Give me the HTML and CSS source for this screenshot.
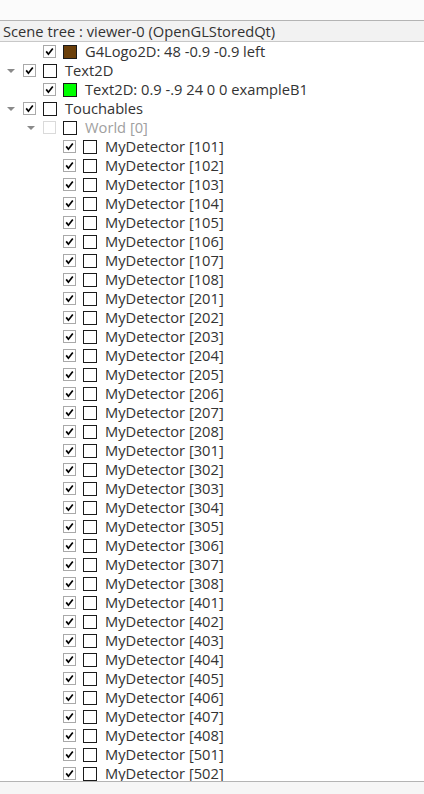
FILE: index.html
```html
<!DOCTYPE html>
<html lang="en">
<head>
    <meta charset="UTF-8">
    <title>Scene tree</title>
    <link rel="stylesheet" href="styles.css">
</head>
<body>
    <div class="top-space"></div>
    <div class="header">Scene tree : viewer-0 (OpenGLStoredQt)</div>

    <div class="tree">
        <div class="row lvl1"><span class="toggle"></span><span class="check on"></span><span class="swatch brown"></span><span class="label">G4Logo2D: 48 -0.9 -0.9 left</span></div>
        <div class="row lvl0"><span class="toggle open"></span><span class="check on"></span><span class="swatch"></span><span class="label">Text2D</span></div>
        <div class="row lvl1"><span class="toggle"></span><span class="check on"></span><span class="swatch green"></span><span class="label">Text2D: 0.9 -.9 24 0 0 exampleB1</span></div>
        <div class="row lvl0"><span class="toggle open"></span><span class="check on"></span><span class="swatch"></span><span class="label">Touchables</span></div>
        <div class="row lvl1"><span class="toggle open"></span><span class="check off"></span><span class="swatch"></span><span class="label muted">World [0]</span></div>
        <div class="row lvl2"><span class="toggle"></span><span class="check on"></span><span class="swatch"></span><span class="label">MyDetector [101]</span></div>
        <div class="row lvl2"><span class="toggle"></span><span class="check on"></span><span class="swatch"></span><span class="label">MyDetector [102]</span></div>
        <div class="row lvl2"><span class="toggle"></span><span class="check on"></span><span class="swatch"></span><span class="label">MyDetector [103]</span></div>
        <div class="row lvl2"><span class="toggle"></span><span class="check on"></span><span class="swatch"></span><span class="label">MyDetector [104]</span></div>
        <div class="row lvl2"><span class="toggle"></span><span class="check on"></span><span class="swatch"></span><span class="label">MyDetector [105]</span></div>
        <div class="row lvl2"><span class="toggle"></span><span class="check on"></span><span class="swatch"></span><span class="label">MyDetector [106]</span></div>
        <div class="row lvl2"><span class="toggle"></span><span class="check on"></span><span class="swatch"></span><span class="label">MyDetector [107]</span></div>
        <div class="row lvl2"><span class="toggle"></span><span class="check on"></span><span class="swatch"></span><span class="label">MyDetector [108]</span></div>
        <div class="row lvl2"><span class="toggle"></span><span class="check on"></span><span class="swatch"></span><span class="label">MyDetector [201]</span></div>
        <div class="row lvl2"><span class="toggle"></span><span class="check on"></span><span class="swatch"></span><span class="label">MyDetector [202]</span></div>
        <div class="row lvl2"><span class="toggle"></span><span class="check on"></span><span class="swatch"></span><span class="label">MyDetector [203]</span></div>
        <div class="row lvl2"><span class="toggle"></span><span class="check on"></span><span class="swatch"></span><span class="label">MyDetector [204]</span></div>
        <div class="row lvl2"><span class="toggle"></span><span class="check on"></span><span class="swatch"></span><span class="label">MyDetector [205]</span></div>
        <div class="row lvl2"><span class="toggle"></span><span class="check on"></span><span class="swatch"></span><span class="label">MyDetector [206]</span></div>
        <div class="row lvl2"><span class="toggle"></span><span class="check on"></span><span class="swatch"></span><span class="label">MyDetector [207]</span></div>
        <div class="row lvl2"><span class="toggle"></span><span class="check on"></span><span class="swatch"></span><span class="label">MyDetector [208]</span></div>
        <div class="row lvl2"><span class="toggle"></span><span class="check on"></span><span class="swatch"></span><span class="label">MyDetector [301]</span></div>
        <div class="row lvl2"><span class="toggle"></span><span class="check on"></span><span class="swatch"></span><span class="label">MyDetector [302]</span></div>
        <div class="row lvl2"><span class="toggle"></span><span class="check on"></span><span class="swatch"></span><span class="label">MyDetector [303]</span></div>
        <div class="row lvl2"><span class="toggle"></span><span class="check on"></span><span class="swatch"></span><span class="label">MyDetector [304]</span></div>
        <div class="row lvl2"><span class="toggle"></span><span class="check on"></span><span class="swatch"></span><span class="label">MyDetector [305]</span></div>
        <div class="row lvl2"><span class="toggle"></span><span class="check on"></span><span class="swatch"></span><span class="label">MyDetector [306]</span></div>
        <div class="row lvl2"><span class="toggle"></span><span class="check on"></span><span class="swatch"></span><span class="label">MyDetector [307]</span></div>
        <div class="row lvl2"><span class="toggle"></span><span class="check on"></span><span class="swatch"></span><span class="label">MyDetector [308]</span></div>
        <div class="row lvl2"><span class="toggle"></span><span class="check on"></span><span class="swatch"></span><span class="label">MyDetector [401]</span></div>
        <div class="row lvl2"><span class="toggle"></span><span class="check on"></span><span class="swatch"></span><span class="label">MyDetector [402]</span></div>
        <div class="row lvl2"><span class="toggle"></span><span class="check on"></span><span class="swatch"></span><span class="label">MyDetector [403]</span></div>
        <div class="row lvl2"><span class="toggle"></span><span class="check on"></span><span class="swatch"></span><span class="label">MyDetector [404]</span></div>
        <div class="row lvl2"><span class="toggle"></span><span class="check on"></span><span class="swatch"></span><span class="label">MyDetector [405]</span></div>
        <div class="row lvl2"><span class="toggle"></span><span class="check on"></span><span class="swatch"></span><span class="label">MyDetector [406]</span></div>
        <div class="row lvl2"><span class="toggle"></span><span class="check on"></span><span class="swatch"></span><span class="label">MyDetector [407]</span></div>
        <div class="row lvl2"><span class="toggle"></span><span class="check on"></span><span class="swatch"></span><span class="label">MyDetector [408]</span></div>
        <div class="row lvl2"><span class="toggle"></span><span class="check on"></span><span class="swatch"></span><span class="label">MyDetector [501]</span></div>
        <div class="row lvl2"><span class="toggle"></span><span class="check on"></span><span class="swatch"></span><span class="label">MyDetector [502]</span></div>
    </div>

    <div class="footer"></div>
</body>
</html>
```

FILE: styles.css
```css
/* General */
* {
    margin: 0;
    padding: 0;
    box-sizing: border-box;
}

body {
    width: 424px;
    height: 794px;
    display: flex;
    flex-direction: column;
    overflow: hidden;
    background-color: #fff;
    font-family: 'Open Sans', 'Noto Sans', sans-serif;
    font-size: 14.7px;
    color: #333;
}

.top-space {
    height: 20px;
    background-color: #fbfbfb;
}

/* Header bar */
.header {
    height: 22px;
    padding-left: 3px;
    line-height: 20px;
    background-color: #f2f2f2;
    border-top: 1px solid #b4b4b4;
    border-bottom: 1px solid #c8c8c8;
    white-space: nowrap;
}

/* Tree */
.tree {
    height: 739px;
    overflow: hidden;
}

.row {
    height: 19px;
    display: flex;
    align-items: center;
    white-space: nowrap;
}

.lvl0 { padding-left: 3px; }
.lvl1 { padding-left: 23px; }
.lvl2 { padding-left: 43px; }

.toggle {
    width: 20px;
    height: 19px;
    position: relative;
}

.toggle.open::after {
    content: "";
    position: absolute;
    left: 4px;
    top: 8px;
    border-left: 4px solid transparent;
    border-right: 4px solid transparent;
    border-top: 4px solid #8a8a8a;
}

.check {
    width: 13px;
    height: 13px;
    border: 1px solid #a9a9a9;
    background-color: #fff;
    margin-right: 7px;
}

.check.on {
    background: #fff no-repeat center / 11px 11px url("data:image/svg+xml,%3Csvg xmlns='http://www.w3.org/2000/svg' viewBox='0 0 11 11'%3E%3Cpath d='M2.2 5.4 L4.4 8.2 L8.8 2.4' fill='none' stroke='%23000' stroke-width='1.7'/%3E%3C/svg%3E");
}

.check.off {
    border-color: #dadada;
}

.swatch {
    width: 14px;
    height: 14px;
    border: 1px solid #1a1a1a;
    background-color: #fff;
    margin-right: 8px;
}

.swatch.brown { background-color: #6b3f0a; }
.swatch.green { background-color: #00ff00; }

.label {
    line-height: 19px;
}

.label.muted {
    color: #a0a0a0;
}

.footer {
    flex: 1;
    background-color: #f6f6f6;
    border-top: 1px solid #b4b4b4;
}
```
